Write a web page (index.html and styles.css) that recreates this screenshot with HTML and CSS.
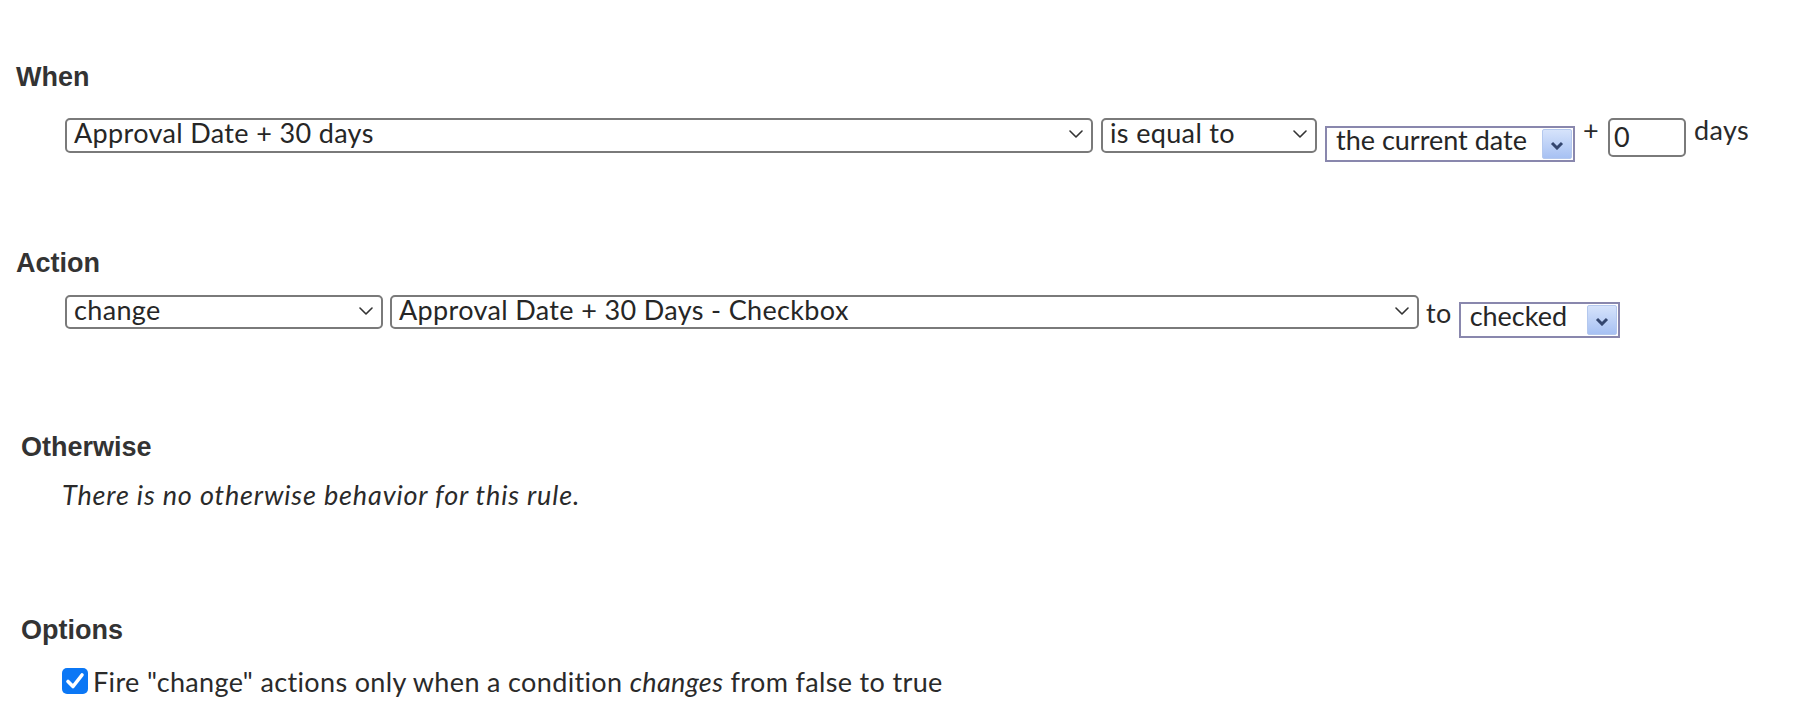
FILE: index.html
```html
<!DOCTYPE html>
<html lang="en">
<head>
<meta charset="utf-8">
<title>Rule</title>
<link rel="stylesheet" href="styles.css">
</head>
<body>
<main class="rule">
  <section class="block block-when">
    <h3 class="label">When</h3>
    <div class="row row-when">
      <div class="select w-field"><span class="select-text">Approval Date + 30 days</span><svg class="chev" width="14" height="8" viewBox="0 0 14 8"><polyline points="1,1 7,7 13,1" fill="none" stroke="#333" stroke-width="1.6" stroke-linecap="round" stroke-linejoin="round"/></svg></div>
      <div class="select w-op"><span class="select-text">is equal to</span><svg class="chev" width="14" height="8" viewBox="0 0 14 8"><polyline points="1,1 7,7 13,1" fill="none" stroke="#333" stroke-width="1.6" stroke-linecap="round" stroke-linejoin="round"/></svg></div>
      <div class="combo combo-date"><span class="combo-text">the current date</span><span class="combo-btn"><svg width="14" height="9" viewBox="0 0 14 9"><polyline points="2,2 7,7 12,2" fill="none" stroke="#34466f" stroke-width="3" stroke-linejoin="miter"/></svg></span></div>
      <span class="txt">+</span>
      <div class="num-input">0</div>
      <span class="txt">days</span>
    </div>
  </section>

  <section class="block block-action">
    <h3 class="label">Action</h3>
    <div class="row row-action">
      <div class="select w-verb"><span class="select-text">change</span><svg class="chev" width="14" height="8" viewBox="0 0 14 8"><polyline points="1,1 7,7 13,1" fill="none" stroke="#333" stroke-width="1.6" stroke-linecap="round" stroke-linejoin="round"/></svg></div>
      <div class="select w-target"><span class="select-text">Approval Date + 30 Days - Checkbox</span><svg class="chev" width="14" height="8" viewBox="0 0 14 8"><polyline points="1,1 7,7 13,1" fill="none" stroke="#333" stroke-width="1.6" stroke-linecap="round" stroke-linejoin="round"/></svg></div>
      <span class="txt txt-to">to</span>
      <div class="combo combo-checked"><span class="combo-text">checked</span><span class="combo-btn"><svg width="14" height="9" viewBox="0 0 14 9"><polyline points="2,2 7,7 12,2" fill="none" stroke="#34466f" stroke-width="3" stroke-linejoin="miter"/></svg></span></div>
    </div>
  </section>

  <section class="block block-otherwise">
    <h3 class="label">Otherwise</h3>
    <p class="note">There is no otherwise behavior for this rule.</p>
  </section>

  <section class="block block-options">
    <h3 class="label">Options</h3>
    <label class="option">
      <svg class="check" width="26" height="26" viewBox="0 0 26 26"><rect x="0" y="0" width="26" height="26" rx="5" fill="#0b77f5"/><polyline points="6,13.5 11,18.5 20,7" fill="none" stroke="#fff" stroke-width="3.6" stroke-linecap="round" stroke-linejoin="round"/></svg>
      <span class="option-text">Fire "change" actions only when a condition <em>changes</em> from false to true</span>
    </label>
  </section>
</main>
</body>
</html>
```

FILE: styles.css
```css
html, body {
  margin: 0;
  padding: 0;
  background: #ffffff;
}

body {
  color: #333333;
  font-family: Lato, "Open Sans", "Liberation Sans", sans-serif;
  font-size: 27px;
  letter-spacing: 0.35px;
}

.rule {
  display: flex;
  flex-direction: column;
}

.label {
  margin: 0;
  font: bold 27px/30px "Liberation Sans", Arial, sans-serif;
  letter-spacing: 0;
  color: #333333;
}

.block-when {
  padding: 62px 0 0 16px;
}

.block-action {
  padding: 86px 0 0 16px;
}

.block-otherwise {
  padding: 94px 0 0 21px;
}

.block-options {
  padding: 105px 0 0 21px;
}

.row {
  display: flex;
  align-items: flex-start;
  margin-left: 49px;
}

.row-when {
  margin-top: 23px;
  gap: 8px;
}

.row-action {
  margin-top: 17px;
  gap: 7px;
}

.select {
  box-sizing: border-box;
  height: 35px;
  margin-top: 3px;
  border: 2px solid #7a7a7a;
  border-radius: 5px;
  background: #ffffff;
  display: flex;
  justify-content: space-between;
  align-items: flex-start;
  padding: 0 8px 0 7px;
  color: #262626;
}

.row-action .select {
  margin-top: 0;
  height: 34px;
}

.select-text {
  line-height: 26px;
  white-space: nowrap;
}

.chev {
  margin-top: 10px;
  flex: none;
}

.w-field { width: 1028px; }
.w-op { width: 216px; }
.w-verb { width: 318px; }
.w-target { width: 1029px; }

.combo {
  box-sizing: border-box;
  height: 36px;
  border: 2px solid #8987ad;
  background: #ffffff;
  display: flex;
  align-items: center;
  justify-content: space-between;
  padding: 0 1px 0 9px;
  color: #262626;
}

.combo-date {
  width: 250px;
  margin-top: 11px;
}

.combo-checked {
  width: 161px;
  margin-top: 7px;
}

.combo-text {
  line-height: 24px;
  letter-spacing: 0;
  white-space: nowrap;
  align-self: flex-start;
  margin-top: 0;
}

.combo-btn {
  box-sizing: border-box;
  width: 30px;
  height: 30px;
  border: 1px solid #b4c8ee;
  border-radius: 2px;
  background: linear-gradient(#d6e3fb, #a7c1f3);
  display: flex;
  align-items: center;
  justify-content: center;
  padding-top: 3px;
}

.txt {
  line-height: 30px;
  white-space: nowrap;
  color: #2a2a2a;
}

.txt-to {
  margin-top: 3px;
}

.num-input {
  box-sizing: border-box;
  width: 78px;
  height: 39px;
  margin: 3px 0 0 1px;
  border: 2px solid #7a7a7a;
  border-radius: 5px;
  padding: 2px 0 0 4px;
  line-height: 30px;
  color: #262626;
}

.note {
  margin: 18px 0 0 41px;
  font-style: italic;
  letter-spacing: 0.85px;
  line-height: 30px;
  color: #2a2a2a;
}

.option {
  display: flex;
  align-items: flex-start;
  gap: 5px;
  margin: 22px 0 0 41px;
}

.check {
  flex: none;
  margin-top: 1px;
}

.option-text {
  line-height: 30px;
  color: #2a2a2a;
  white-space: nowrap;
}

.option-text em {
  font-style: italic;
}
```
